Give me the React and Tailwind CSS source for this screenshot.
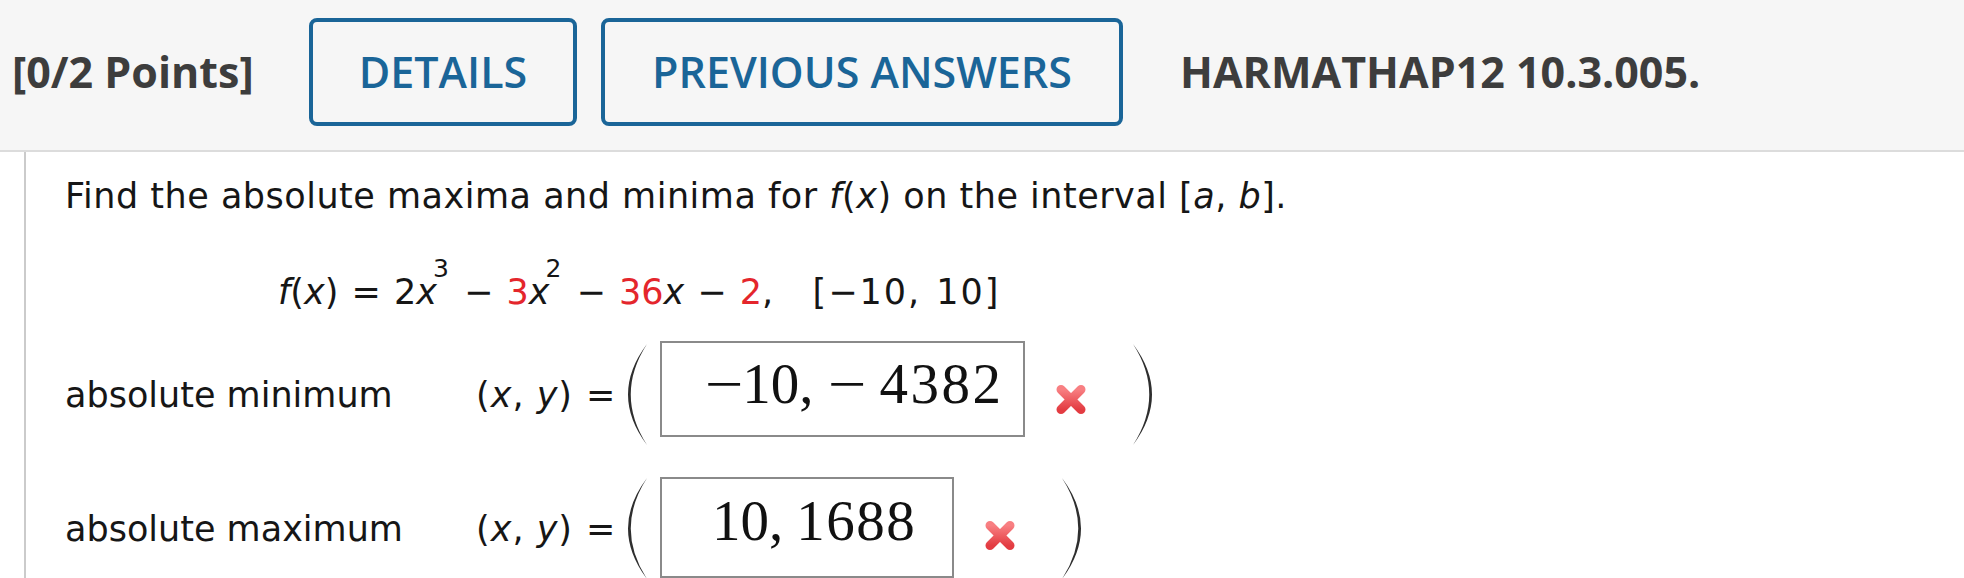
import React from "react";

function BigParen({ right = false }) {
  return (
    <svg width="21" height="101" viewBox="0 0 21 101" className="block">
      <path
        d={right ? "M1 0 Q39 50.5 1 101 Q33.5 50.5 1 0 Z" : "M20 0 Q-18 50.5 20 101 Q-12.5 50.5 20 0 Z"}
        fill="#2e2e2e"
      />
    </svg>
  );
}

function XMark() {
  return (
    <svg width="36" height="35" viewBox="0 0 36 35" className="block">
      <defs>
        <linearGradient id="xg" x1="0" y1="0" x2="0" y2="1">
          <stop offset="0" stopColor="#f87f82" />
          <stop offset="1" stopColor="#e33c42" />
        </linearGradient>
      </defs>
      <g stroke="url(#xg)" strokeWidth="9" strokeLinecap="round">
        <line x1="8" y1="7.5" x2="28" y2="27.5" />
        <line x1="28" y1="7.5" x2="8" y2="27.5" />
      </g>
    </svg>
  );
}

function Minus() {
  return <span className="inline-block scale-x-[1.2]">−</span>;
}

function Row({ label, children, boxW, boxH, labelMt, parenMt, lead }) {
  return (
    <div className="flex items-start">
      <div className="w-[411px] leading-[42px] whitespace-nowrap" style={{ marginTop: labelMt }}>
        {label}
      </div>
      <div className="w-[110px] leading-[42px] whitespace-nowrap tracking-[1px]" style={{ marginTop: labelMt }}>
        (<i>x</i>, <i>y</i>)
      </div>
      <div className="w-[41px] leading-[42px] whitespace-nowrap" style={{ marginTop: labelMt }}>
        =
      </div>
      <div style={{ marginTop: parenMt }}>
        <BigParen />
      </div>
      <div
        className="ml-[12px] border-2 border-[#8a8a8a] bg-white font-['Liberation_Serif',serif] text-[57px] text-[#111] whitespace-nowrap"
        style={{ width: boxW, height: boxH, lineHeight: lead }}
      >
        {children}
      </div>
      <div className="ml-[28px] mt-[41px]">
        <XMark />
      </div>
      <div className="ml-[43px]" style={{ marginTop: parenMt }}>
        <BigParen right />
      </div>
    </div>
  );
}

export default function App() {
  return (
    <div className="w-[1964px] h-[578px] overflow-hidden bg-white">
      <div className="h-[152px] bg-[#f6f6f6] border-b-2 border-[#dcdcdc] flex items-center pl-[12px] pb-[6px] font-['Open_Sans',sans-serif]">
        <div className="w-[297px] text-[43px] font-bold text-[#3d3d3d] whitespace-nowrap">[0/2 Points]</div>
        <div className="w-[268px] h-[108px] border-4 border-[#1a6598] rounded-[8px] flex items-center justify-center text-[43px] font-semibold text-[#1a6598]">
          DETAILS
        </div>
        <div className="ml-[24px] w-[522px] h-[108px] border-4 border-[#1a6598] rounded-[8px] flex items-center justify-center text-[43px] font-semibold text-[#1a6598] whitespace-nowrap">
          PREVIOUS ANSWERS
        </div>
        <div className="ml-[57px] text-[43px] font-bold text-[#3d3d3d] whitespace-nowrap">HARMATHAP12 10.3.005.</div>
      </div>
      <div className="flex h-[426px]">
        <div className="w-[24px]" />
        <div className="w-[2px] bg-[#cbcbcb]" />
        <div className="pl-[39px] font-['DejaVu_Sans',Verdana,sans-serif] text-[35px] text-[#161616]">
          <p className="mt-[23px] leading-[42px] whitespace-nowrap tracking-[0.5px]">
            Find the absolute maxima and minima for <i>f</i>(<i>x</i>) on the interval [<i>a</i>, <i>b</i>].
          </p>
          <p className="mt-[54px] pl-[213px] leading-[42px] whitespace-nowrap [word-spacing:2px]">
            <i>f</i>(<i>x</i>) = 2<i>x</i>
            <span className="relative -top-[27px] -ml-[4px] mr-[2px] text-[25px]">3</span> − <span className="text-[#e4262c]">3</span>
            <i>x</i>
            <span className="relative -top-[27px] -ml-[4px] mr-[2px] text-[25px]">2</span> − <span className="text-[#e4262c]">36</span>
            <i>x</i> − <span className="text-[#e4262c]">2</span>,{"\u00a0\u00a0\u00a0"}
            <span className="tracking-[2px]">[−10, 10]</span>
          </p>
          <div className="mt-[24px]">
            <Row label="absolute minimum" boxW={365} boxH={96} labelMt={33} parenMt={3} lead="81px">
              <span className="ml-[46px]"><Minus /></span>
              <span className="ml-[2px]">10,</span>
              <span className="ml-[18px]"><Minus /></span>
              <span className="ml-[16px] tracking-[2.5px]">4382</span>
            </Row>
          </div>
          <div className="mt-[32px]">
            <Row label="absolute maximum" boxW={294} boxH={101} labelMt={31} parenMt={1} lead="83px">
              <span className="ml-[50px]">10,</span>
              <span className="ml-[13px] tracking-[1.5px]">1688</span>
            </Row>
          </div>
        </div>
      </div>
    </div>
  );
}
